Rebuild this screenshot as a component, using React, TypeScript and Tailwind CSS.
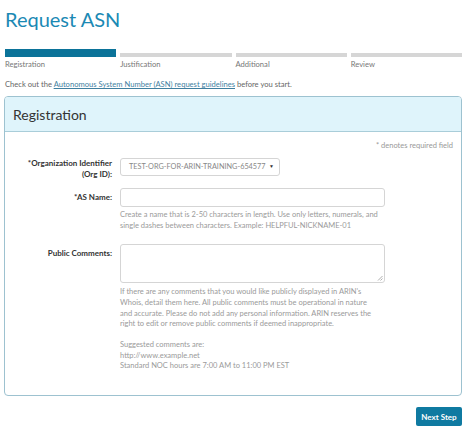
export default function App() {
  const steps = ["Registration", "Justification", "Additional", "Review"];
  return (
    <div className="w-[474px] h-[434px] bg-white pl-[5px] pr-[12px] text-[#555]" style={{ fontFamily: 'Lato, "Liberation Sans", sans-serif' }}>
      <h1 className="pt-[7px] text-[20px] leading-[24px] text-[#1b89b4]">Request ASN</h1>

      {/* progress steps */}
      <div className="mt-[18px] grid grid-cols-4 gap-[4px]">
        {steps.map((s, i) => (
          <div key={s} className="flex flex-col">
            <div className="flex h-[8px] items-end">
              <div className={i === 0 ? "h-[8px] w-full bg-[#0b7399]" : "h-[4px] w-full bg-[#d6d6d6]"} />
            </div>
            <span className="mt-[2px] text-[7.6px] leading-[10px] text-[#777]">{s}</span>
          </div>
        ))}
      </div>

      <p className="mt-[10px] text-[7.6px] leading-[10px] text-[#666]">
        Check out the <span className="text-[#3f7f9f] underline">Autonomous System Number (ASN) request guidelines</span> before you start.
      </p>

      {/* panel */}
      <div className="-ml-[1px] mt-[7px] h-[300px] rounded-[4px] border border-[#9dc2d0] overflow-hidden">
        <div className="h-[35px] border-b border-[#a9cdd9] bg-[#dff4fb] pl-[8px] text-[14px] leading-[35px] text-[#333]">Registration</div>
        <div className="px-[8px] pt-[9px]">
          <p className="text-right text-[7.5px] leading-[10px] text-[#999]">* denotes required field</p>

          <div className="mt-[7px] flex">
            <div className="w-[99px] text-right text-[8px] font-bold leading-[11px] text-[#333]">
              *Organization Identifier<br />(Org ID):
            </div>
            <div className="ml-[8px] flex h-[18px] w-[160px] items-center justify-between rounded-[3px] border border-[#d5d5d5] pl-[8px] pr-[5px] text-[7.3px] text-[#888] whitespace-nowrap">
              <span>TEST-ORG-FOR-ARIN-TRAINING-654577</span>
              <span className="text-[5px] text-[#333]">▼</span>
            </div>
          </div>

          <div className="mt-[8px] flex">
            <div className="w-[99px] pt-[4px] text-right text-[8px] font-bold leading-[10px] text-[#333]">*AS Name:</div>
            <div className="ml-[8px] w-[265px]">
              <div className="h-[19px] rounded-[3px] border border-[#d5d5d5]" />
              <p className="mt-[3px] text-[7.5px] leading-[10.5px] text-[#9a9a9a]">
                Create a name that is 2-50 characters in length. Use only letters, numerals, and single dashes between characters. Example: HELPFUL-NICKNAME-01
              </p>
            </div>
          </div>

          <div className="mt-[13px] flex">
            <div className="w-[99px] pt-[4px] text-right text-[8px] font-bold leading-[10px] text-[#333]">Public Comments:</div>
            <div className="ml-[8px] w-[265px]">
              <div className="relative h-[39px] rounded-[3px] border border-[#d5d5d5]">
                <svg className="absolute bottom-[1px] right-[1px]" width="6" height="6" viewBox="0 0 6 6">
                  <path d="M5.5 1 L1 5.5 M5.5 3.5 L3.5 5.5" stroke="#999" strokeWidth="0.8" />
                </svg>
              </div>
              <p className="mt-[4px] whitespace-nowrap text-[7.5px] leading-[10.8px] text-[#9a9a9a]">
                If there are any comments that you would like publicly displayed in ARIN's
                <br />
                Whois, detail them here. All public comments must be operational in nature
                <br />
                and accurate. Please do not add any personal information. ARIN reserves the
                <br />
                right to edit or remove public comments if deemed inappropriate.
              </p>
              <p className="mt-[10px] text-[7.5px] leading-[10.5px] text-[#9a9a9a]">
                Suggested comments are:<br />http://www.example.net<br />Standard NOC hours are 7:00 AM to 11:00 PM EST
              </p>
            </div>
          </div>
        </div>
      </div>

      <div className="mt-[11px] flex justify-end">
        <button className="h-[19px] w-[46px] rounded-[2px] bg-[#0f7aa1] text-[8px] font-bold text-white">Next Step</button>
      </div>
    </div>
  );
}
